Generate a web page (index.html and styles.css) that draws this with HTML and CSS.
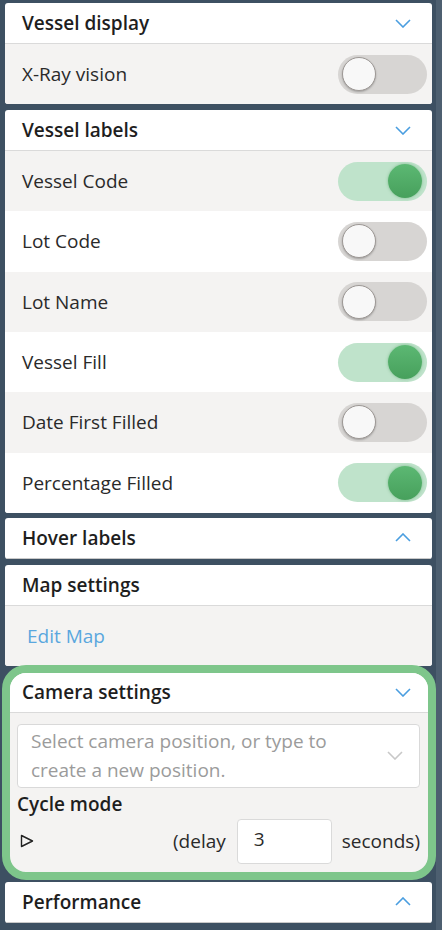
FILE: index.html
```html
<!DOCTYPE html>
<html>
<head>
<meta charset="utf-8">
<link rel="stylesheet" href="styles.css">
</head>
<body>
<div class="page">
  <section class="panel">
    <div class="hdr"><span>Vessel display</span><svg class="chev" viewBox="0 0 16 9"><path d="M1 1 L8 8 L15 1"/></svg></div>
    <div class="row gray"><span>X-Ray vision</span><span class="tg"><span class="knob"></span></span></div>
  </section>
  <section class="panel p2">
    <div class="hdr"><span>Vessel labels</span><svg class="chev" viewBox="0 0 16 9"><path d="M1 1 L8 8 L15 1"/></svg></div>
    <div class="row gray"><span>Vessel Code</span><span class="tg on"><span class="knob"></span></span></div>
    <div class="row"><span>Lot Code</span><span class="tg"><span class="knob"></span></span></div>
    <div class="row gray"><span>Lot Name</span><span class="tg"><span class="knob"></span></span></div>
    <div class="row"><span>Vessel Fill</span><span class="tg on"><span class="knob"></span></span></div>
    <div class="row gray"><span>Date First Filled</span><span class="tg"><span class="knob"></span></span></div>
    <div class="row"><span>Percentage Filled</span><span class="tg on"><span class="knob"></span></span></div>
  </section>
  <section class="panel">
    <div class="hdr solo"><span>Hover labels</span><svg class="chev" viewBox="0 0 16 9"><path d="M1 8 L8 1 L15 8"/></svg></div>
  </section>
  <section class="panel map">
    <div class="hdr"><span>Map settings</span></div>
    <div class="row gray link"><span>Edit Map</span></div>
  </section>
  <section class="camera">
    <div class="hdr cam-hdr"><span>Camera settings</span><svg class="chev" viewBox="0 0 16 9"><path d="M1 1 L8 8 L15 1"/></svg></div>
    <div class="cam-body">
      <div class="select">
        <span class="ph">Select camera position, or type to create a new position.</span>
        <svg class="sel-chev" viewBox="0 0 16 9"><path d="M1 1 L8 8 L15 1"/></svg>
      </div>
      <div class="cycle">Cycle mode</div>
      <div class="cyc-row">
        <svg class="play" viewBox="0 0 14 14"><path d="M1.5 1.5 L12.5 7 L1.5 12.5 Z"/></svg>
        <span class="delay">(delay</span>
        <span class="num">3</span>
        <span class="secs">seconds)</span>
      </div>
    </div>
  </section>
  <section class="panel perf">
    <div class="hdr solo"><span>Performance</span><svg class="chev" viewBox="0 0 16 9"><path d="M1 8 L8 1 L15 8"/></svg></div>
  </section>
</div>
</body>
</html>
```
FILE: styles.css
```css
html, body {
  margin: 0;
  padding: 0;
}
body {
  width: 442px;
  height: 930px;
  overflow: hidden;
  background: linear-gradient(to right, #3d5062 0, #3d5062 436px, #4d5f70 436px);
  font-family: "Open Sans", "Noto Sans", sans-serif;
  color: #222;
}
.page {
  padding: 3px 10px 0 5px;
  display: flex;
  flex-direction: column;
}
.panel {
  background: #fff;
  border-radius: 3px;
  overflow: hidden;
  margin-bottom: 6px;
}
.p2 {
  margin-bottom: 5px;
}
.hdr {
  box-sizing: border-box;
  border-bottom: 1px solid #dadada;
  display: flex;
  align-items: center;
  justify-content: space-between;
  padding: 0 21px 0 17px;
  font-size: 19px;
  font-weight: 600;
  color: #1e1e1e;
  height: 41px;
}
.hdr.solo {
  border-bottom: 1px solid #c9c9c9;
}
.chev {
  width: 16px;
  height: 9px;
  fill: none;
  stroke: #4a9ee0;
  stroke-width: 1.6;
}
.row {
  height: 60px;
  display: flex;
  align-items: center;
  justify-content: space-between;
  padding: 0 5px 0 17px;
  font-size: 19px;
  color: #2a2a2a;
  background: #fff;
}
.p2 .row {
  height: 60.33px;
}
.row.gray {
  background: #f4f3f2;
}
.link {
  padding-left: 22px;
  color: #5aa7de;
}
.tg {
  width: 89px;
  height: 39px;
  border-radius: 20px;
  background: #d7d5d3;
  display: flex;
  align-items: center;
  padding: 0 4px;
  box-sizing: border-box;
}
.knob {
  width: 34px;
  height: 34px;
  border-radius: 50%;
  background: #f8f8f8;
  box-sizing: border-box;
  border: 1px solid #9d9895;
  box-shadow: 0 1px 2px rgba(0,0,0,0.25);
}
.tg.on {
  background: #bfe3cb;
  justify-content: flex-end;
  padding-right: 5px;
}
.tg.on .knob {
  background: linear-gradient(#5cb873, #47a05c);
  border: none;
  box-shadow: 0 0 3px rgba(60,150,80,0.5);
}
.map {
  margin-bottom: 0;
}
.map .row {
  height: 60px;
}
.camera {
  margin: -1px -4px 2px -3px;
  border: 8px solid #7ec68b;
  border-radius: 24px;
  background: #f4f3f2;
  overflow: hidden;
}
.cam-hdr {
  background: #fff;
  height: 40px;
  padding: 0 17px 0 12px;
}
.cam-body {
  padding: 11px 8px 8px 7px;
  display: flex;
  flex-direction: column;
}
.select {
  height: 64px;
  box-sizing: border-box;
  background: #fff;
  border: 1px solid #d9d9d9;
  border-radius: 4px;
  display: flex;
  align-items: center;
  justify-content: space-between;
  padding: 0 16px 0 13px;
}
.ph {
  font-size: 19px;
  line-height: 29px;
  color: #9b9b9b;
  width: 330px;
}
.sel-chev {
  width: 16px;
  height: 9px;
  fill: none;
  stroke: #c8c8c8;
  stroke-width: 1.6;
}
.cycle {
  font-size: 19px;
  font-weight: 600;
  color: #1e1e1e;
  line-height: 20px;
  margin-top: 6px;
}
.cyc-row {
  display: flex;
  align-items: center;
  margin-top: 5px;
  font-size: 19px;
  color: #2a2a2a;
}
.play {
  width: 14px;
  height: 14px;
  fill: none;
  stroke: #222;
  stroke-width: 1.4;
  stroke-linejoin: round;
  margin-left: 3px;
  margin-right: auto;
}
.delay {
  margin-right: 11px;
}
.num {
  width: 95px;
  height: 45px;
  box-sizing: border-box;
  background: #fff;
  border: 1px solid #dadada;
  border-radius: 4px;
  padding: 6px 0 0 16px;
}
.secs {
  margin-left: 10px;
}
.perf {
  margin-bottom: 0;
}
```
